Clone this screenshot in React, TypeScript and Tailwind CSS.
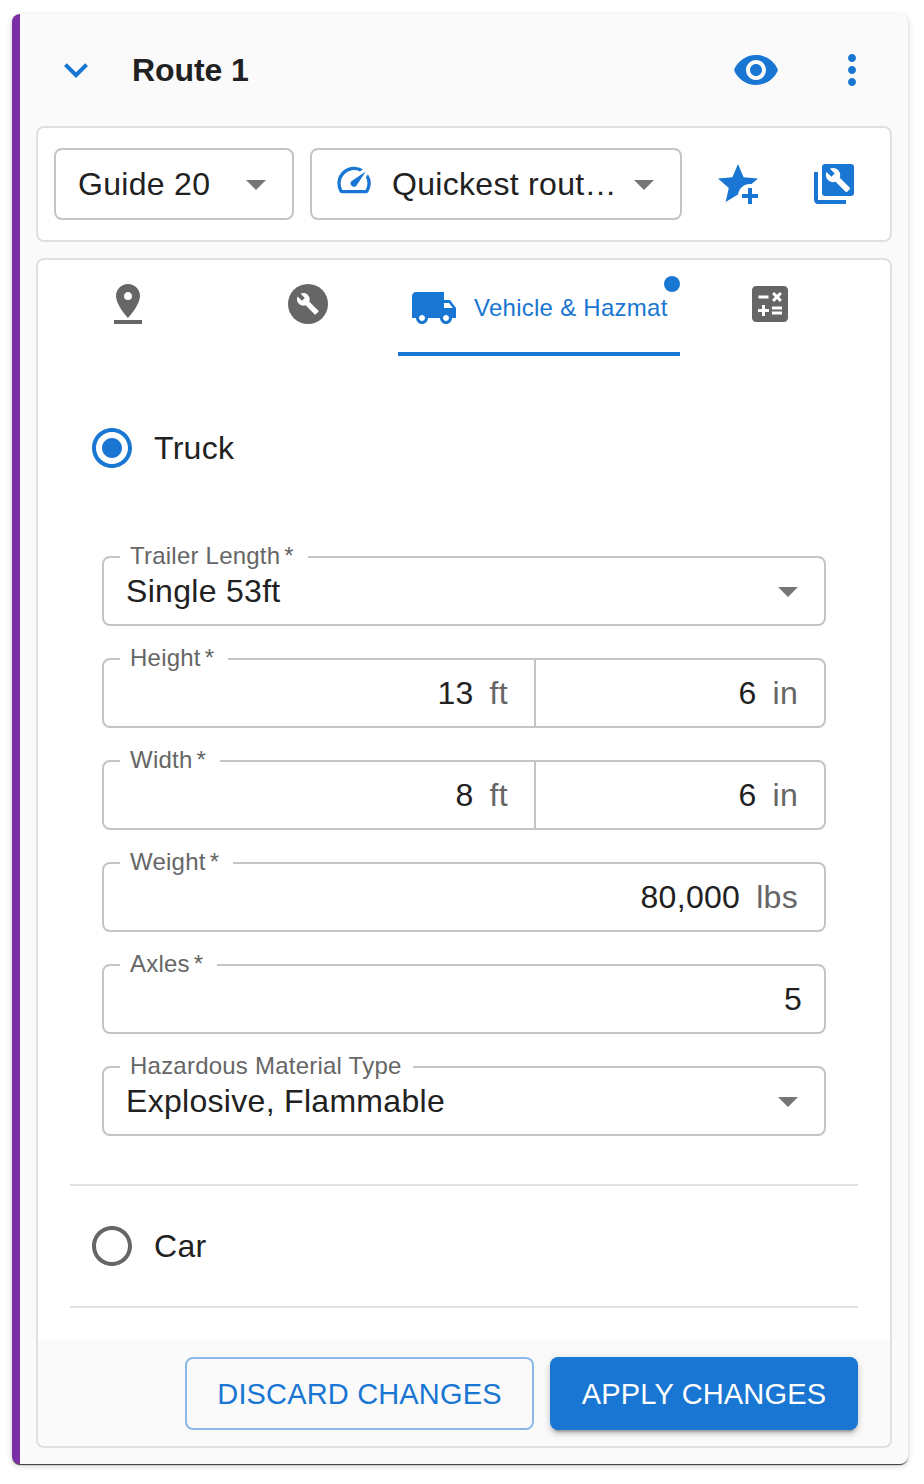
import React from 'react';
import {
  MdArrowDropDown,
  MdCalculate,
  MdExpandMore,
  MdLocalShipping,
  MdMoreVert,
  MdPinDrop,
  MdRadioButtonChecked,
  MdRadioButtonUnchecked,
  MdSpeed,
  MdVisibility,
} from 'react-icons/md';

const WRENCH =
  'M22.7 19l-9.1-9.1c.9-2.3.4-5-1.5-6.9-2-2-5-2.4-7.4-1.3L9 6 6 9 1.6 4.7C.4 7.1.9 10.1 2.9 12.1c1.9 1.9 4.6 2.4 6.9 1.5l9.1 9.1c.4.4 1 .4 1.4 0l2.3-2.3c.5-.4.5-1.1.1-1.4z';

const StarPlusIcon: React.FC = () => (
  <svg viewBox="0 0 24 24" fill="currentColor" className="size-12">
    <path d="M5.8 21L7.4 14L2 9.2L9.2 8.6L12 2L14.8 8.6L22 9.2L18.8 12H18C14.9 12 12.4 14.3 12 17.3L5.8 21M17 14V17H14V19H17V22H19V19H22V17H19V14H17Z" />
  </svg>
);

const LibraryBuildIcon: React.FC = () => (
  <svg viewBox="0 0 24 24" fill="currentColor" className="size-12">
    <path d="M4 6H2v14c0 1.1.9 2 2 2h14v-2H4V6z" />
    <rect x="6" y="2" width="16" height="16" rx="1.6" />
    <path fill="#fff" transform="translate(7.4 3.4) scale(.55)" d={WRENCH} />
  </svg>
);

const BuildCircleIcon: React.FC = () => (
  <svg viewBox="0 0 24 24" fill="currentColor" className="size-12">
    <circle cx="12" cy="12" r="10" />
    <path fill="#fff" transform="translate(6 6) scale(.49)" d={WRENCH} />
  </svg>
);

interface FieldProps {
  label: string;
  required?: boolean;
  children: React.ReactNode;
}

const Field: React.FC<FieldProps> = ({ label, required, children }) => (
  <fieldset className="h-[70px] min-w-0 rounded-lg border-2 border-[#c4c4c4]">
    {/* zero-height legend keeps the notch without pushing the value down */}
    <legend
      className={`ml-4 h-0 whitespace-nowrap pl-2.5 text-2xl leading-[0px] tracking-[0.225px] text-[#666] ${
        required ? 'pr-3.5' : 'pr-[11px]'
      }`}
    >
      <span className="relative -top-px">
        {label}
        {required && <span className="-ml-px">&thinsp;*</span>}
      </span>
    </legend>
    <div className="flex h-[66px]">{children}</div>
  </fieldset>
);

const SelectValue: React.FC<{ value: string }> = ({ value }) => (
  <div className="flex flex-1 items-center justify-between pr-3 pl-[22px]">
    <span>{value}</span>
    <MdArrowDropDown className="size-12 text-[#757575]" />
  </div>
);

const UnitValue: React.FC<{ value: string; unit: string; className: string }> = ({ value, unit, className }) => (
  <div className={`flex items-center justify-end gap-4 pr-[26px] ${className}`}>
    <span>{value}</span>
    <span className="text-[#666]">{unit}</span>
  </div>
);

const App: React.FC = () => {
  return (
    <div className="h-[1484px] w-[924px] bg-white pt-3.5 pl-3 font-['Liberation_Sans',Arial,sans-serif] text-[32px] leading-[46px] tracking-[0.3px] text-[#212121]">
      <div className="flex h-[1450px] w-[896px] flex-col gap-4 rounded-lg border-l-8 border-[#7b2fa6] bg-[#fafafa] px-4 pb-4 shadow-[0_2px_1px_-1px_rgba(0,0,0,0.6),0_1px_1px_rgba(0,0,0,0.35),0_2px_6px_rgba(0,0,0,0.16)]">
        <header className="-mb-4 flex h-28 items-center pr-4 pl-4 text-[#1976d2]">
          <MdExpandMore className="size-12" />
          <h2 className="ml-8 flex-1 font-bold tracking-[-0.1px] text-[#212121]">Route 1</h2>
          <MdVisibility className="size-12" />
          <MdMoreVert className="ml-12 size-12" />
        </header>

        <section className="flex h-[116px] shrink-0 items-start rounded-lg border-2 border-[#e0e0e0] bg-white px-4 pt-5 text-[#1976d2]">
          <div className="flex h-[72px] w-60 items-center justify-between rounded-lg border-2 border-[#c4c4c4] pr-3 pl-[22px]">
            <span className="text-[#212121]">Guide 20</span>
            <MdArrowDropDown className="size-12 text-[#757575]" />
          </div>
          <div className="ml-4 flex h-[72px] w-[372px] items-center rounded-lg border-2 border-[#c4c4c4] pr-3 pl-[22px]">
            <MdSpeed className="mb-2 size-10" />
            <span className="ml-[18px] flex-1 whitespace-nowrap text-[#212121]">Quickest rout…</span>
            <MdArrowDropDown className="size-12 text-[#757575]" />
          </div>
          <div className="mt-3 ml-8 flex gap-12">
            <StarPlusIcon />
            <LibraryBuildIcon />
          </div>
        </section>

        <section className="flex flex-1 flex-col overflow-hidden rounded-lg border-2 border-[#e0e0e0] bg-white">
          <nav className="flex h-24 text-[#666]">
            <div className="flex w-[180px] justify-center pt-5">
              <MdPinDrop className="size-12" />
            </div>
            <div className="flex w-[180px] justify-center pt-5">
              <BuildCircleIcon />
            </div>
            <div className="relative flex w-[282px] border-b-4 border-[#1976d2] pt-6 pl-3 text-[#1976d2]">
              <MdLocalShipping className="size-12" />
              <span className="ml-4 whitespace-nowrap text-2xl leading-[48px] tracking-[0.26px]">Vehicle &amp; Hazmat</span>
              <span className="absolute top-4 right-0 size-4 rounded-full bg-[#1976d2]" />
            </div>
            <div className="flex w-[180px] justify-center pt-5">
              <MdCalculate className="size-12" />
            </div>
          </nav>

          <div className="flex-1 px-8">
            <div className="mt-[68px] flex items-center pl-[18px]">
              <MdRadioButtonChecked className="size-12 text-[#1976d2]" />
              <span className="ml-[18px]">Truck</span>
            </div>

            <div className="mx-8 mt-[84px] flex flex-col gap-8">
              <Field label="Trailer Length" required>
                <SelectValue value="Single 53ft" />
              </Field>
              <Field label="Height" required>
                <UnitValue value="13" unit="ft" className="w-[432px] border-r-2 border-[#c4c4c4]" />
                <UnitValue value="6" unit="in" className="flex-1" />
              </Field>
              <Field label="Width" required>
                <UnitValue value="8" unit="ft" className="w-[432px] border-r-2 border-[#c4c4c4]" />
                <UnitValue value="6" unit="in" className="flex-1" />
              </Field>
              <Field label="Weight" required>
                <UnitValue value="80,000" unit="lbs" className="flex-1" />
              </Field>
              <Field label="Axles" required>
                <div className="flex flex-1 items-center justify-end pr-[22px]">5</div>
              </Field>
              <Field label="Hazardous Material Type">
                <SelectValue value="Explosive, Flammable" />
              </Field>
            </div>

            <div className="mt-12 flex h-[124px] items-center border-y-2 border-[#e0e0e0] pl-[18px]">
              <MdRadioButtonUnchecked className="size-12 text-[#666]" />
              <span className="ml-[18px]">Car</span>
            </div>
          </div>

          <footer className="flex h-[106px] items-start justify-end gap-4 bg-[#fafafa] pt-[17px] pr-8 text-[29px] leading-[48px] tracking-[0.16px]">
            <button className="flex h-[73px] w-[349px] items-center justify-center whitespace-nowrap rounded-lg border-2 border-[#8cbae8] text-[#1976d2]">
              DISCARD CHANGES
            </button>
            <button className="flex h-[73px] w-[308px] items-center justify-center whitespace-nowrap rounded-lg bg-[#1976d2] text-white shadow-[0_6px_2px_-4px_rgba(0,0,0,0.2),0_4px_4px_rgba(0,0,0,0.14),0_2px_10px_rgba(0,0,0,0.12)]">
              APPLY CHANGES
            </button>
          </footer>
        </section>
      </div>
    </div>
  );
};

export default App;
